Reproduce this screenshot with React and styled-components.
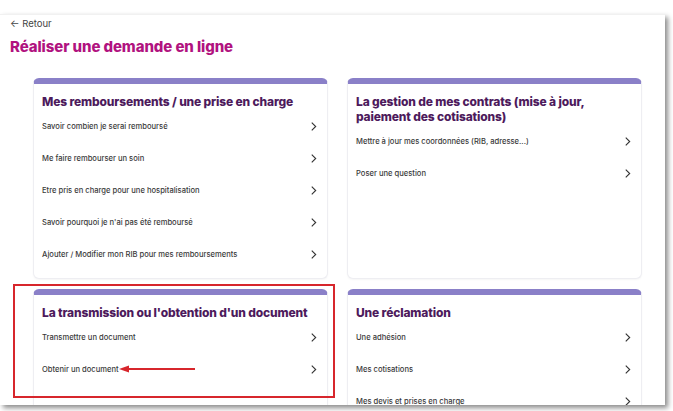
import React from "react";
import styled, { createGlobalStyle } from "styled-components";

const GlobalStyle = createGlobalStyle`
  html, body {
    margin: 0;
    padding: 0;
    background: #fff;
    font-family: Inter, "Noto Sans", Arial, sans-serif;
  }
`;

const sections = [
  {
    title: "Mes remboursements / une prise en charge",
    items: [
      "Savoir combien je serai remboursé",
      "Me faire rembourser un soin",
      "Etre pris en charge pour une hospitalisation",
      "Savoir pourquoi je n'ai pas été remboursé",
      "Ajouter / Modifier mon RIB pour mes remboursements",
    ],
  },
  {
    title: "La gestion de mes contrats (mise à jour, paiement des cotisations)",
    items: ["Mettre à jour mes coordonnées (RIB, adresse...)", "Poser une question"],
  },
  {
    title: "La transmission ou l'obtention d'un document",
    items: ["Transmettre un document", "Obtenir un document"],
    highlight: true,
  },
  {
    title: "Une réclamation",
    items: ["Une adhésion", "Mes cotisations", "Mes devis et prises en charge"],
  },
];

export default function App() {
  return (
    <>
      <GlobalStyle />
      <Screen>
        <Page>
          <Back>
            <span>←</span> Retour
          </Back>
          <Title>Réaliser une demande en ligne</Title>
          <Grid>
            {sections.map((s) => (
              <Card key={s.title} title={s.title} items={s.items} highlight={s.highlight} />
            ))}
          </Grid>
        </Page>
      </Screen>
    </>
  );
}

function Card({ title, items, highlight }) {
  return (
    <CardWrap>
      {highlight && <Highlight />}
      <CardBox>
        <CardTitle>{title}</CardTitle>
        {items.map((item, i) => (
          <Item key={item}>
            <ItemLabel>
              {item}
              {highlight && i === 1 && <Arrow />}
            </ItemLabel>
            <Chevron viewBox="0 0 8 12">
              <path d="M2 1.5 L6.5 6 L2 10.5" fill="none" stroke="#333" strokeWidth="1.3" />
            </Chevron>
          </Item>
        ))}
      </CardBox>
    </CardWrap>
  );
}

function Arrow() {
  return (
    <ArrowSvg viewBox="0 0 76 8">
      <path d="M76 4 H8" stroke="#d7262c" strokeWidth="2.2" />
      <path d="M0 4 L10 0.5 L10 7.5 Z" fill="#d7262c" />
    </ArrowSvg>
  );
}

const Screen = styled.div`
  width: 673px;
  height: 411px;
  overflow: hidden;
  padding-top: 14px;
  box-sizing: border-box;
`;

const Page = styled.div`
  width: 665px;
  height: 391px;
  background: #fff;
  border-top: 1px solid #f1f1f1;
  box-shadow: 3px 3px 5px rgba(0, 0, 0, 0.45);
  overflow: hidden;
  box-sizing: border-box;
  padding: 2px 0 0 10px;
`;

const Back = styled.div`
  font-size: 9.5px;
  color: #444;
  line-height: 12px;
  span {
    font-size: 10px;
  }
`;

const Title = styled.h1`
  margin: 7px 0 0;
  font-size: 15px;
  line-height: 20px;
  font-weight: 800;
  color: #b1127f;
  letter-spacing: -0.1px;
`;

const Grid = styled.div`
  display: grid;
  grid-template-columns: 295px 295px;
  column-gap: 19px;
  row-gap: 10px;
  grid-template-rows: 201px 201px;
  margin: 21px 0 0 23px;
`;

const CardWrap = styled.div`
  position: relative;
`;

const Highlight = styled.div`
  position: absolute;
  left: -20px;
  top: -5px;
  width: 322px;
  height: 114px;
  border: 2.5px solid #d7262c;
  box-sizing: border-box;
  z-index: 2;
  pointer-events: none;
`;

const CardBox = styled.div`
  height: 100%;
  box-sizing: border-box;
  background: #fff;
  border: 1px solid #eeeef2;
  border-top: 6px solid #8a80c8;
  border-radius: 6px;
  padding: 10px 9px 0 8px;
  box-shadow: 0 1px 2px rgba(0, 0, 0, 0.04);
`;

const CardTitle = styled.h2`
  margin: 0 0 1px;
  font-size: 12px;
  line-height: 15px;
  font-weight: 800;
  color: #4d1a5c;
  letter-spacing: -0.15px;
`;

const Item = styled.div`
  display: flex;
  align-items: center;
  justify-content: space-between;
  height: 32px;
  padding-right: 1px;
`;

const ItemLabel = styled.span`
  position: relative;
  font-size: 7.6px;
  font-weight: 500;
  color: #3a3a3a;
`;

const ArrowSvg = styled.svg`
  position: absolute;
  left: 100%;
  top: 50%;
  width: 76px;
  height: 8px;
  margin-top: -4px;
`;

const Chevron = styled.svg`
  width: 7px;
  height: 11px;
`;
